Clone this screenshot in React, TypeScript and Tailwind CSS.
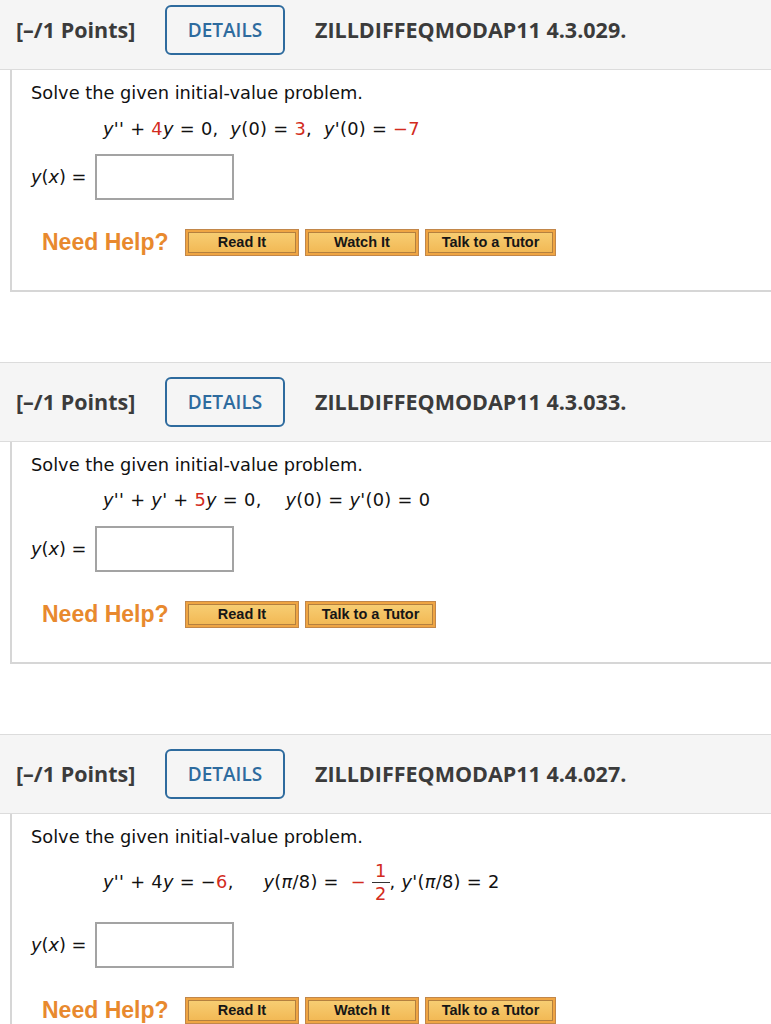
import React from "react";

const body = "font-['DejaVu_Sans',sans-serif]";
const red = "text-[#d22b20]";

function Y({ p = "" }: { p?: string }) {
    return <span className="italic">y{p}</span>;
}

function Header({ code }: { code: string }) {
    return (
        <div className="flex h-[80px] items-center border-y border-[#dcdcdc] bg-[#f5f5f5] font-['Open_Sans',sans-serif] text-[#3b3b3b]">
            <div className="w-[165px] pl-[16px] text-[21.5px] font-bold">[–/1 Points]</div>
            <div className="flex h-[50px] w-[120px] items-center justify-center rounded-md border-2 border-[#2e6b9e] text-[19px] font-semibold text-[#2e6b9e]">
                DETAILS
            </div>
            <div className="ml-[30px] text-[21.5px] font-bold">{code}</div>
        </div>
    );
}

function HelpButton({ label, w }: { label: string; w: string }) {
    return (
        <div className={`${w} h-[27px] border border-[#c2874a] bg-[#efa543] p-[2px]`}>
            <div className="flex h-full items-center justify-center border border-[#b4803f] bg-gradient-to-b from-[#f7cd72] to-[#f2b955] font-['Liberation_Sans',Arial,sans-serif] text-[14.5px] font-bold text-[#161616]">
                {label}
            </div>
        </div>
    );
}

function Card({ equation, eqClass, buttons }: { equation: React.ReactNode; eqClass: string; buttons: string[] }) {
    const widths: Record<string, string> = {
        "Read It": "w-[114px]",
        "Watch It": "w-[114px]",
        "Talk to a Tutor": "w-[131px]",
    };
    return (
        <div className={`ml-[10px] border-b-2 border-l-2 border-[#d6d6d6] pl-[19px] pb-[34px] pt-[13px] text-[17.8px] text-[#111] ${body}`}>
            <div className="h-[20px] leading-[20px]">Solve the given initial-value problem.</div>
            <div className={`pl-[72px] tracking-[0.3px] ${eqClass}`}>{equation}</div>
            <div className="flex items-center">
                <span className="w-[64px]"><Y />(<span className="italic">x</span>) =</span>
                <div className="h-[46px] w-[139px] border-2 border-[#a3a3a3] bg-white"></div>
            </div>
            <div className="mt-[29px] flex h-[27px] items-center">
                <span className="ml-[11px] w-[143px] font-['Liberation_Sans',Arial,sans-serif] text-[23px] font-bold leading-[27px] text-[#e8892e]">Need Help?</span>
                <div className="flex gap-[6px]">
                    {buttons.map((b) => (
                        <HelpButton key={b} label={b} w={widths[b]} />
                    ))}
                </div>
            </div>
        </div>
    );
}

export default function App() {
    return (
        <div className="-mt-[10px] min-h-screen bg-white">
            <Header code="ZILLDIFFEQMODAP11 4.3.029." />
            <Card
                eqClass="mt-[16px] mb-[15px] h-[20px] leading-[20px]"
                equation={
                    <span>
                        <Y p="''" /> + <span className={red}>4</span><Y /> = 0,&nbsp; <Y />(0) = <span className={red}>3</span>,&nbsp; <Y p="'" />(0) = <span className={red}>−7</span>
                    </span>
                }
                buttons={["Read It", "Watch It", "Talk to a Tutor"]}
            />
            <div className="h-[70px]"></div>
            <Header code="ZILLDIFFEQMODAP11 4.3.033." />
            <Card
                eqClass="mt-[15px] mb-[16px] h-[20px] leading-[20px]"
                equation={
                    <span>
                        <Y p="''" /> + <Y p="'" /> + <span className={red}>5</span><Y /> = 0, &nbsp;&nbsp; <Y />(0) = <Y p="'" />(0) = 0
                    </span>
                }
                buttons={["Read It", "Talk to a Tutor"]}
            />
            <div className="h-[70px]"></div>
            <Header code="ZILLDIFFEQMODAP11 4.4.027." />
            <Card
                eqClass="mt-[9px] mb-[14px] flex h-[52px] items-center"
                equation={
                    <span className="flex items-center">
                        <span><Y p="''" /> + 4<Y /> = −<span className={red}>6</span>, &nbsp;&nbsp;&nbsp; <Y />(<span className="italic">π</span>/8) = &nbsp;<span className={red}>−</span>&nbsp;</span>
                        <span className={`inline-flex flex-col items-center leading-[22px] ${red}`}>
                            <span className="px-[3px]">1</span>
                            <span className="h-[1px] w-full bg-[#333]"></span>
                            <span>2</span>
                        </span>
                        <span>, <Y p="'" />(<span className="italic">π</span>/8) = 2</span>
                    </span>
                }
                buttons={["Read It", "Watch It", "Talk to a Tutor"]}
            />
        </div>
    );
}
